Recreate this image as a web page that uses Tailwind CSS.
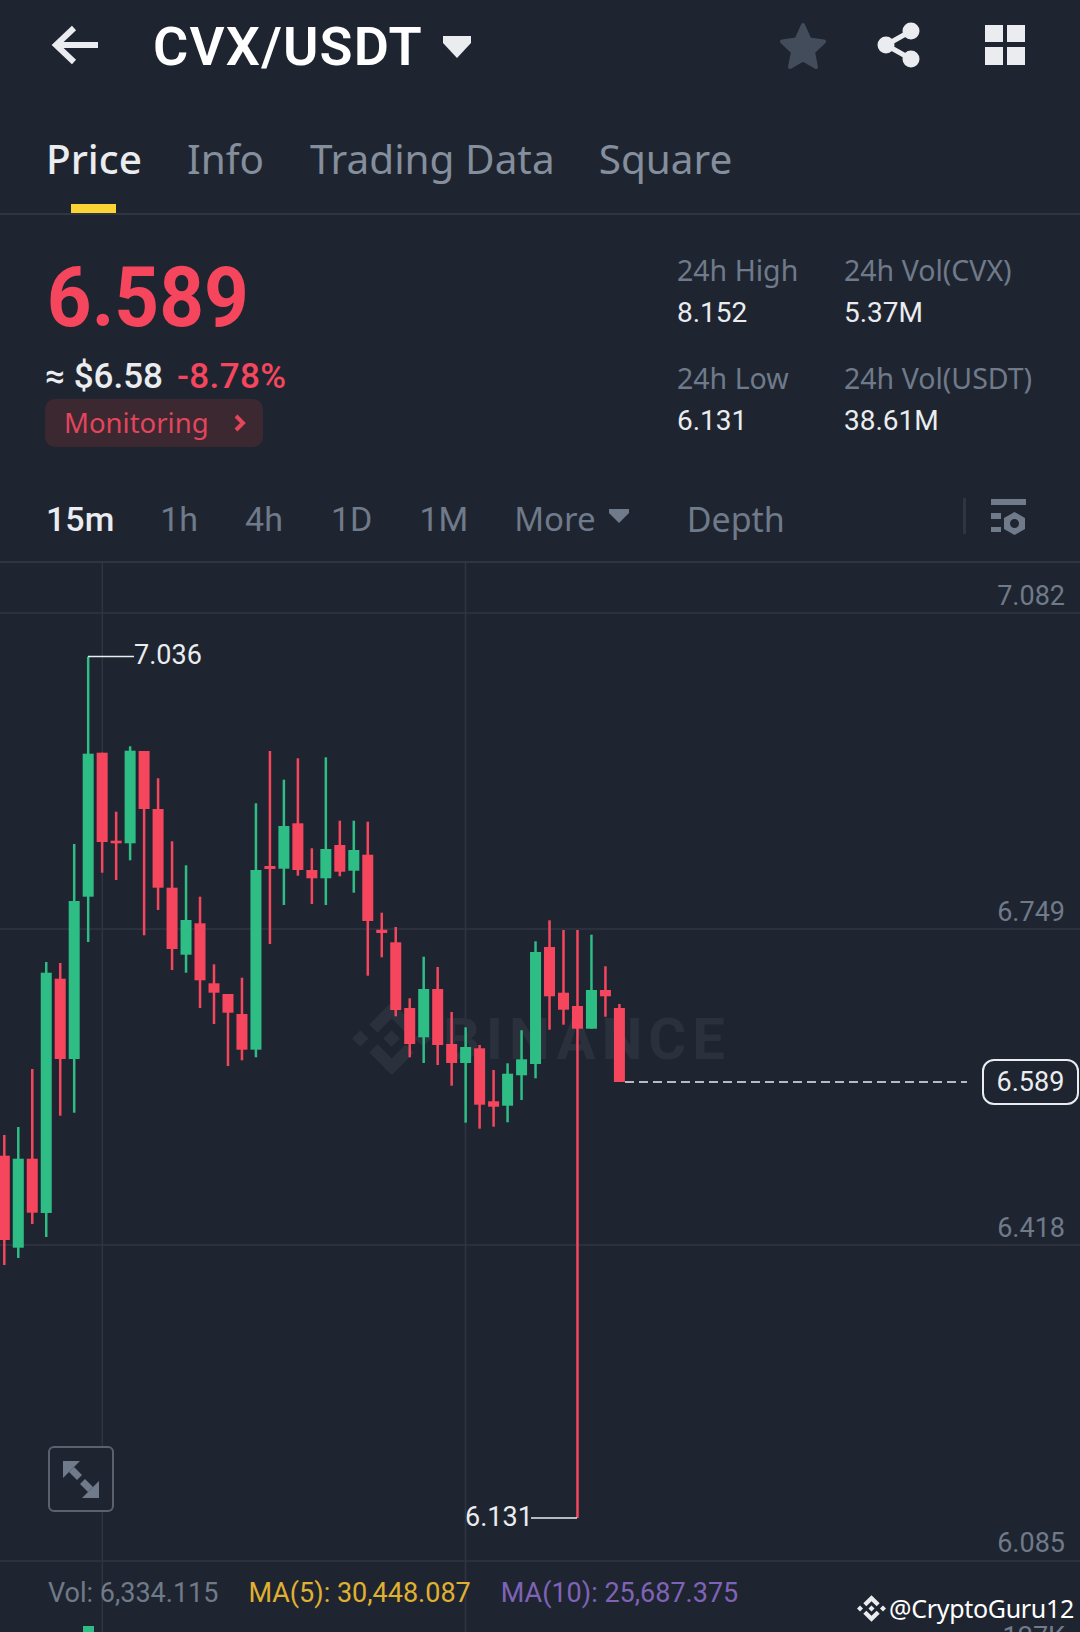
<!DOCTYPE html>
<html lang="en">
  <head>
    <meta charset="UTF-8" />
    <title>CVX/USDT</title>
    <script src="https://cdn.jsdelivr.net/npm/@tailwindcss/browser@4"></script>
  </head>
  <body class="bg-[#1f2530]">
    <div class="w-[1080px] h-[1632px] overflow-hidden bg-[#1f2530] font-['Noto_Sans',sans-serif] text-[#eaecef]">
      <!-- top bar -->
      <header class="h-[90px] flex items-center pl-[51px] relative">
        <svg class="w-[48px] h-[40px]" viewBox="0 0 48 40" fill="none" stroke="#eaecef" stroke-width="6">
          <path d="M47 20H6" />
          <path d="M23 3 5 20l18 17" />
        </svg>
        <div class="ml-[54px] mt-[3px] font-['Roboto',sans-serif] font-semibold text-[54px] tracking-[1.200px] text-white leading-none">CVX/USDT</div>
        <svg class="ml-[20px] mt-[3px] w-[28px] h-[22px]" viewBox="0 0 28 22" fill="#eaecef"><path d="M0 0h28v7L14 22 0 7z" /></svg>
        <div class="ml-auto flex items-center pr-[55px]">
          <svg class="w-[46px] h-[48px] mr-[1px] mt-[1px]" viewBox="0 0 46 48" fill="#434c5a" stroke="#434c5a" stroke-width="4" stroke-linejoin="round"><path d="M23 3l6.500 14.500 14.500 2-11 10.500 3 15L23 37.500 10 45l3-15L2 19.500l14.500-2z" /></svg>
          <svg class="ml-[50px] w-[44px] h-[48px]" viewBox="0 0 44 48" fill="#eaecef" stroke="#eaecef" stroke-width="5"><path d="M34 10 9 24l25 14" fill="none" /><circle cx="34" cy="10" r="6" /><circle cx="9" cy="24" r="6" /><circle cx="34" cy="38" r="6" /></svg>
          <div class="ml-[64px] grid grid-cols-2 gap-x-[4px] gap-y-[5px]">
            <div class="w-[18px] h-[17px] bg-[#eaecef]"></div>
            <div class="w-[18px] h-[17px] bg-[#eaecef]"></div>
            <div class="w-[18px] h-[18px] bg-[#eaecef]"></div>
            <div class="w-[18px] h-[18px] bg-[#eaecef]"></div>
          </div>
        </div>
      </header>

      <!-- tabs -->
      <nav class="h-[125px] border-b-2 border-[#2f3641] flex items-start pl-[46px] pt-[41px] text-[40.500px] leading-[56px] text-[#848e9c]">
        <div class="relative text-[#eaecef] font-medium h-[82px]">
          Price
          <div class="absolute left-[25px] bottom-0 w-[45px] h-[9px] bg-[#fcd535]"></div>
        </div>
        <div class="ml-[45px]">Info</div>
        <div class="ml-[46px]">Trading Data</div>
        <div class="ml-[44px]">Square</div>
      </nav>

      <!-- price summary -->
      <section class="h-[232px] flex font-['Roboto',sans-serif]">
        <div class="w-[677px] pl-[45px] pt-[41px]">
          <div class="text-[84px] leading-[84px] font-bold text-[#f6465d] origin-left scale-x-[0.93] pl-[2px]">6.589</div>
          <div class="mt-[17px] flex items-center text-[35px] leading-[40px] font-medium">
            <span class="text-[#eaecef]">≈ $6.58</span>
            <span class="ml-[14px] tracking-[0.400px] text-[#f6465d]">-8.78%</span>
          </div>
          <div class="mt-[2px] w-[218px] h-[48px] rounded-[10px] bg-[#3b2831] flex items-center pl-[19px] font-['Noto_Sans',sans-serif] text-[27.500px] text-[#e2455c]">
            Monitoring
            <svg class="ml-[24px] w-[14px] h-[18px]" viewBox="0 0 14 18" fill="none" stroke="#e2455c" stroke-width="4"><path d="M3 2l7 7-7 7" /></svg>
          </div>
        </div>
        <div class="pt-[36px] grid grid-cols-[167px_1fr] grid-rows-[108px_108px]">
          <div>
            <div class="font-['Noto_Sans',sans-serif] text-[28.500px] leading-[38px] text-[#6f7a8a]">24h High</div>
            <div class="text-[28px] leading-[36px] mt-[6px]">8.152</div>
          </div>
          <div>
            <div class="font-['Noto_Sans',sans-serif] text-[28.500px] leading-[38px] text-[#6f7a8a]">24h Vol(CVX)</div>
            <div class="text-[28px] leading-[36px] mt-[6px]">5.37M</div>
          </div>
          <div>
            <div class="font-['Noto_Sans',sans-serif] text-[28.500px] leading-[38px] text-[#6f7a8a]">24h Low</div>
            <div class="text-[28px] leading-[36px] mt-[6px]">6.131</div>
          </div>
          <div>
            <div class="font-['Noto_Sans',sans-serif] text-[28.500px] leading-[38px] text-[#6f7a8a]">24h Vol(USDT)</div>
            <div class="text-[28px] leading-[36px] mt-[6px]">38.61M</div>
          </div>
        </div>
      </section>

      <!-- interval bar -->
      <div class="relative h-[116px] border-b-2 border-[#2f3641] flex items-start pt-[49px] pl-[46px] text-[34px] leading-[46px] text-[#6f7a8a] font-['Roboto',sans-serif]">
        <div class="text-[#eaecef] font-medium">15m</div>
        <div class="ml-[46px]">1h</div>
        <div class="ml-[47px]">4h</div>
        <div class="ml-[48px]">1D</div>
        <div class="ml-[47px]">1M</div>
        <div class="ml-[46px] font-['Noto_Sans',sans-serif] text-[33px]">More</div>
        <svg class="ml-[13px] mt-[13px] w-[20px] h-[14px]" viewBox="0 0 20 14" fill="#6f7a8a"><path d="M0 0h20v4L10 14 0 4z" /></svg>
        <div class="ml-[58px] font-['Noto_Sans',sans-serif]">Depth</div>
        <div class="absolute left-[963px] top-[51px] w-[3px] h-[36px] bg-[#2f3641]"></div>
        <svg class="absolute left-[991px] top-[52px] w-[35px] h-[36px]" viewBox="0 0 35 36" fill="#6f7a8a">
          <path d="M0 0h35v6H0zM0 14h10v6H0zM0 28h10v5H0z" />
          <path fill-rule="evenodd" d="M23.500 13l10.500 6v11l-10.500 6L13 30V19zm0 7a4.500 4.500 0 1 0 0 9 4.500 4.500 0 0 0 0-9z" />
        </svg>
      </div>

      <!-- chart -->
      <main class="relative h-[1069px] font-['Roboto',sans-serif]">
        <svg class="absolute inset-0 w-[1080px] h-[1069px]" viewBox="0 563 1080 1069">
          <g stroke="#2f3641" stroke-width="1.500">
            <path d="M0 613H1080M0 929H1080M0 1245H1080M0 1561H1080" />
            <path d="M102.300 563V1632M465.500 563V1632" />
          </g>
          <g fill="#2b313c">
            <path transform="translate(352 1002) scale(2.280)" d="M11.190 13.440 17.400 7.230l6.210 6.210 3.610-3.610L17.400 0 7.580 9.830zM3.620 12.390 7.230 16l-3.610 3.610L0 16zM11.190 18.560l6.210 6.210 6.210-6.210 3.610 3.610L17.400 32l-9.820-9.820zM31.180 12.390 34.800 16l-3.620 3.610L27.570 16zM21.060 16 17.400 12.340 14.700 15.040l-.95.950L17.400 19.660z" />
          </g>
          <g id="candles"></g>
          <g stroke="#eaecef" stroke-width="1.500" fill="none">
            <path d="M88 656.500H134" />
            <path d="M531 1518H577" />
            <path d="M625 1082H967" stroke-dasharray="9 5" />
          </g>
        </svg>

        <div class="absolute right-[15px] top-[15px] text-[27px] leading-[36px] text-[#6f7a8a]">7.082</div>
        <div class="absolute right-[15px] top-[331px] text-[27px] leading-[36px] text-[#6f7a8a]">6.749</div>
        <div class="absolute right-[15px] top-[647px] text-[27px] leading-[36px] text-[#6f7a8a]">6.418</div>
        <div class="absolute right-[15px] top-[962px] text-[27px] leading-[36px] text-[#6f7a8a]">6.085</div>

        <div class="absolute left-[134px] top-[74px] text-[27px] leading-[36px]">7.036</div>
        <div class="absolute left-[465px] top-[936px] text-[27px] leading-[36px]">6.131</div>

        <div class="absolute left-[982px] top-[496px] w-[97px] h-[46px] pt-[1px] rounded-[12px] border-2 border-[#eaecef] bg-[#1f2530] flex items-center justify-center text-[27px]">6.589</div>

        <div class="absolute left-[48px] top-[883px] w-[66px] h-[66px] rounded-[6px] border-2 border-[#5a6270] bg-[#1f2530]">
          <svg class="absolute left-[13px] top-[13px] w-[36px] h-[37px]" viewBox="0 0 36 37" fill="#6f7a8a">
            <path d="M0 0h17L0 17z" />
            <path d="M6 11l5-5 8 8-5 5z" />
            <path d="M36 37H19l17-17z" />
            <path d="M30 26l-5 5-8-8 5-5z" />
          </svg>
        </div>

        <div class="h-[998px]"></div>
        <div class="relative flex items-start pl-[48px] pt-[14px] text-[27px] leading-[36px]">
          <span class="text-[#6f7a8a]">Vol: 6,334.115</span>
          <span class="ml-[30px] text-[#e0b130]">MA(5): 30,448.087</span>
          <span class="ml-[30px] text-[#7f63b8]">MA(10): 25,687.375</span>
        </div>

        <div class="absolute left-[83px] top-[1063px] w-[11px] h-[6px] bg-[#2ebd85]"></div>
        <div class="absolute right-[15px] top-[1061px] text-[27px] leading-[27px] text-[#6f7a8a]">127K</div>
        <div class="absolute left-[857px] top-[1029px] flex items-center">
          <svg class="w-[29px] h-[29px]" viewBox="0 0 34.800 32" fill="#eaecef">
            <path d="M11.190 13.440 17.400 7.230l6.210 6.210 3.610-3.610L17.400 0 7.580 9.830zM3.620 12.390 7.230 16l-3.610 3.610L0 16zM11.190 18.560l6.210 6.210 6.210-6.210 3.610 3.610L17.400 32l-9.820-9.820zM31.180 12.390 34.800 16l-3.620 3.610L27.570 16zM21.060 16 17.400 12.340 14.700 15.040l-.95.950L17.400 19.660z" />
          </svg>
          <span class="ml-[3px] font-['Noto_Sans',sans-serif] text-[25px] tracking-[-0.300px] leading-[32px] text-white">@CryptoGuru12</span>
        </div>
      </main>
    </div>
    <script>
      // colour, wick top, body top, body bottom, wick bottom (page y)
      const data = [
        ["r",1135,1155.7,1240,1265],["g",1127,1158.7,1247.7,1258],["r",1069,1158.7,1212.7,1224],
        ["g",962,972.7,1213,1237],["r",963,978.7,1059,1115.7],["g",844,901,1059,1112.7],
        ["g",656.7,753.7,896.7,942],["r",752.7,752.7,842,872.7],["r",811.7,840.7,843.3,880],
        ["g",746.3,750.7,843.3,860.3],["r",751,751,809,935.3],["r",778.3,809,887.7,910],
        ["r",841.3,887.7,949,970],["g",865.3,920,954.7,972.7],["r",896.7,923.3,980.3,1008],
        ["r",964.3,983.3,992.7,1024],["r",994,994,1012.7,1066],["r",977.7,1014,1049.7,1060.3],
        ["g",803.3,870,1049.7,1057.3],["r",751,866,869,944],["g",779.7,826,868.7,905],
        ["r",758.3,823.3,870,875.7],["r",848.3,870,878.3,904],["g",757.3,849,878.3,905],
        ["r",820.7,845,871.7,876.3],["g",820.7,850,870.7,892.7],["r",821.7,854.7,921,975.7],
        ["r",912.7,929.7,933,957.3],["r",927,942.3,1010,1016.3],["r",998.3,1008,1044,1057.3],
        ["g",956.7,989,1037.3,1063],["r",967,989,1045,1065],["r",1012,1044,1063,1085.7],
        ["g",1027.3,1047,1063,1122.7],["r",1045,1048.3,1104.7,1128.7],["r",1070,1101.3,1106.7,1126.7],
        ["g",1063.3,1073.7,1105.7,1122.3],["g",1030.3,1059.3,1075.3,1100],["g",941.3,952,1064,1078.3],
        ["r",920.3,947,996.3,1029.7],["r",930,992.7,1009.7,1024.7],["r",930,1006,1028.7,1518],
        ["g",934.7,990,1028.7,1028.7],["r",966.3,990,996.3,1016.7],["r",1004,1008,1082,1082]
      ];
      let out = '<text x="443" y="1059" font-family="Roboto" font-weight="700" font-size="58" letter-spacing="6" fill="#2b313c">BINANCE</text>';
      data.forEach((c, n) => {
        const cx = 4.3 + n * 13.98;
        const fill = c[0] === "g" ? "#2ebd85" : "#f6465d";
        out += `<rect x="${cx - 1.25}" y="${c[1]}" width="2.5" height="${c[4] - c[1]}" fill="${fill}"/>`;
        out += `<rect x="${cx - 5.5}" y="${c[2]}" width="11" height="${c[3] - c[2]}" fill="${fill}"/>`;
      });
      document.getElementById("candles").innerHTML = out;
    </script>
  </body>
</html>
